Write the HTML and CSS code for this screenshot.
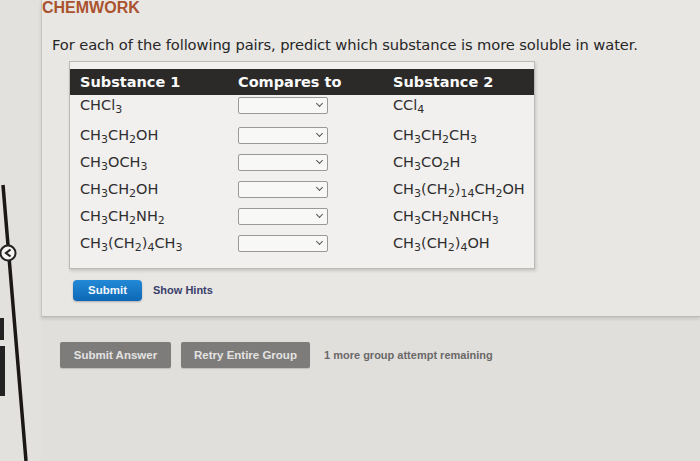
FILE: index.html
```html
<!DOCTYPE html>
<html>
<head>
<meta charset="utf-8">
<link rel="stylesheet" href="styles.css">
</head>
<body>
<div class="screen">
  <div class="rail">
    <svg class="rail-art" width="42" height="461" viewBox="0 0 42 461">
      <rect x="0" y="318" width="4" height="22" fill="#222"/>
      <rect x="0" y="346" width="5" height="50" fill="#222"/>
      <line x1="3" y1="185" x2="26" y2="461" stroke="#1a1716" stroke-width="3.5"/>
      <circle cx="8" cy="253" r="7.5" fill="#f4f3f1" stroke="#222" stroke-width="2"/>
      <path d="M10.5 249.5 L6 253 L10.5 256.5" fill="none" stroke="#222" stroke-width="2.2"/>
    </svg>
  </div>
  <div class="main">
    <section class="panel">
      <h1 class="brand">CHEMWORK</h1>
      <p class="prompt">For each of the following pairs, predict which substance is more soluble in water.</p>
      <div class="card">
        <table class="grid">
          <thead>
            <tr><th>Substance 1</th><th>Compares to</th><th>Substance 2</th></tr>
          </thead>
          <tbody>
            <tr><td>CHCl<sub>3</sub></td><td><span class="select"></span></td><td>CCl<sub>4</sub></td></tr>
            <tr><td>CH<sub>3</sub>CH<sub>2</sub>OH</td><td><span class="select"></span></td><td>CH<sub>3</sub>CH<sub>2</sub>CH<sub>3</sub></td></tr>
            <tr><td>CH<sub>3</sub>OCH<sub>3</sub></td><td><span class="select"></span></td><td>CH<sub>3</sub>CO<sub>2</sub>H</td></tr>
            <tr><td>CH<sub>3</sub>CH<sub>2</sub>OH</td><td><span class="select"></span></td><td>CH<sub>3</sub>(CH<sub>2</sub>)<sub>14</sub>CH<sub>2</sub>OH</td></tr>
            <tr><td>CH<sub>3</sub>CH<sub>2</sub>NH<sub>2</sub></td><td><span class="select"></span></td><td>CH<sub>3</sub>CH<sub>2</sub>NHCH<sub>3</sub></td></tr>
            <tr><td>CH<sub>3</sub>(CH<sub>2</sub>)<sub>4</sub>CH<sub>3</sub></td><td><span class="select"></span></td><td>CH<sub>3</sub>(CH<sub>2</sub>)<sub>4</sub>OH</td></tr>
          </tbody>
        </table>
      </div>
      <div class="actions">
        <span class="btn-submit">Submit</span>
        <span class="hints">Show Hints</span>
      </div>
    </section>
    <div class="group-actions">
      <span class="btn-grey btn-answer">Submit Answer</span>
      <span class="btn-grey btn-retry">Retry Entire Group</span>
      <span class="remaining">1 more group attempt remaining</span>
    </div>
  </div>
</div>
</body>
</html>
```
FILE: styles.css
```css
html, body {
  margin: 0;
  padding: 0;
}
body {
  width: 700px;
  height: 461px;
  overflow: hidden;
  background: #e1dfdc;
  font-family: "DejaVu Sans", Verdana, sans-serif;
}
.screen {
  display: flex;
  width: 700px;
  height: 461px;
}
.rail {
  width: 41px;
  flex: none;
  background: #e3e1de;
}
.rail-art {
  display: block;
}
.main {
  flex: 1;
  display: flex;
  flex-direction: column;
}
.panel {
  background: #e9e7e4;
  border-left: 1px solid #c9c6c2;
  border-bottom: 1px solid #bdbab6;
  box-shadow: 0 2px 3px rgba(0,0,0,0.12);
  height: 317px;
  box-sizing: border-box;
}
.brand {
  margin: 0;
  padding: 0;
  font-family: "Liberation Sans", Arial, sans-serif;
  font-weight: bold;
  font-size: 16px;
  line-height: 16px;
  color: #a9532f;
}
.prompt {
  margin: 20px 0 0 10px;
  font-size: 14.7px;
  line-height: 18px;
  color: #262626;
  letter-spacing: -0.1px;
}
.card {
  margin: 7px 0 0 27px;
  width: 466px;
  background: #f1f0ee;
  border: 1px solid #bcbab6;
  box-shadow: 1px 2px 3px rgba(0,0,0,0.15);
  padding: 7px 0 11px 0;
  box-sizing: border-box;
}
.grid {
  width: 100%;
  border-collapse: collapse;
}
.grid th {
  background: #2b2a29;
  color: #fafafa;
  font-size: 14.5px;
  font-weight: bold;
  text-align: left;
  height: 26px;
  padding: 0;
  line-height: 26px;
}
.grid th:nth-child(1), .grid td:nth-child(1) {
  padding-left: 10px;
  width: 158px;
}
.grid th:nth-child(2), .grid td:nth-child(2) {
  width: 155px;
}
.grid td {
  height: 27px;
  padding: 0;
  font-size: 14.5px;
  line-height: 18px;
  color: #2e2e2e;
  vertical-align: middle;
}
.grid tbody tr:first-child td {
  height: 25.5px;
  vertical-align: top;
  padding-top: 1px;
}
.grid sub {
  font-size: 11px;
  vertical-align: -3px;
  line-height: 0;
}
.select {
  display: block;
  width: 88px;
  height: 15px;
  background: #f8f8f7;
  border: 1px solid #9b9995;
  border-radius: 2px;
  position: relative;
}
.grid tbody tr:first-child .select {
  margin-top: 1px;
}
.select::after {
  content: "";
  position: absolute;
  right: 5px;
  top: 3px;
  width: 4px;
  height: 4px;
  border-right: 1.3px solid #555;
  border-bottom: 1.3px solid #555;
  transform: rotate(45deg);
}
.actions {
  display: flex;
  align-items: center;
  gap: 11px;
  margin: 11px 0 0 31px;
}
.btn-submit {
  display: inline-flex;
  align-items: center;
  justify-content: center;
  width: 69px;
  height: 21px;
  border-radius: 4px;
  background: linear-gradient(#2289d6, #0d68b5);
  color: #f2f6fb;
  font-family: "Liberation Sans", Arial, sans-serif;
  font-weight: bold;
  font-size: 11.5px;
  box-shadow: 0 1px 2px rgba(0,0,0,0.25);
}
.hints {
  font-family: "Liberation Sans", Arial, sans-serif;
  font-weight: bold;
  font-size: 11px;
  color: #39406a;
}
.group-actions {
  display: flex;
  align-items: center;
  gap: 10px;
  margin: 25px 0 0 19px;
}
.btn-grey {
  display: inline-flex;
  align-items: center;
  justify-content: center;
  height: 26px;
  border-radius: 2px;
  background: #7d7c7b;
  color: #e4e3e2;
  font-family: "Liberation Sans", Arial, sans-serif;
  font-weight: bold;
  font-size: 11.5px;
  box-shadow: 0 1px 1px rgba(0,0,0,0.15);
}
.btn-answer {
  width: 111px;
}
.btn-retry {
  width: 129px;
}
.remaining {
  margin-left: 4px;
  font-family: "Liberation Sans", Arial, sans-serif;
  font-weight: bold;
  font-size: 11px;
  color: #6a6968;
}
```
